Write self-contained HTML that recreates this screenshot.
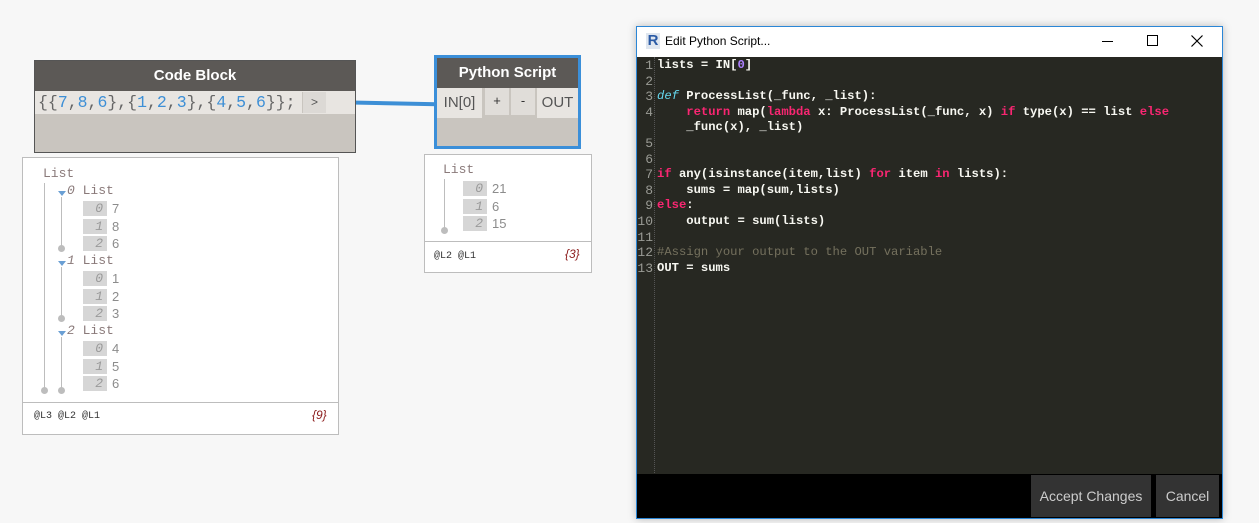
<!DOCTYPE html>
<html><head><meta charset="utf-8"><style>
*{margin:0;padding:0;box-sizing:border-box}
body{width:1259px;height:523px;background:#f7f7f7;position:relative;overflow:hidden;font-family:"Liberation Sans",sans-serif}
.abs{position:absolute}
.mono{font-family:"Liberation Mono",monospace}
.hdr{background:#5c5956;color:#fff;font-weight:bold;font-size:15px;text-align:center}
.watch{background:#fff;border:1px solid #bdbdbd}
.t{position:absolute;font-family:"Liberation Mono",monospace;font-size:13px;color:#8a7a7a;white-space:pre}
.ix{position:absolute;width:24px;height:15px;background:#d6d6d6;color:#999;font-style:italic;font-family:"Liberation Mono",monospace;font-size:13px;text-align:right;padding-right:4px;line-height:15px}
.v{position:absolute;font-family:"Liberation Sans",sans-serif;font-size:13px;color:#8c8c8c;line-height:15px}
.vl{position:absolute;width:1px;background:#bdbdbd}
.dot{position:absolute;width:7px;height:7px;border-radius:50%;background:#bdbdbd}
.tri{position:absolute;width:0;height:0;border-left:4px solid transparent;border-right:4px solid transparent;border-top:5px solid #6a9fd4}
.code{position:absolute;left:657px;font-family:"Liberation Mono",monospace;font-size:12.2px;color:#f8f8f2;font-weight:bold;white-space:pre;line-height:15.6px}
.ln{position:absolute;left:636px;width:17px;text-align:right;font-family:"Liberation Mono",monospace;font-size:13px;color:#9a9b95;line-height:15.6px}
.k{color:#f92672}.d{color:#66d9ef;font-style:italic;font-weight:normal}.n{color:#ae81ff}.c{color:#75715e;font-weight:normal}
</style></head><body>

<!-- wire -->
<div class="abs" style="left:327px;top:100px;width:110px;height:4px;background:#3d8fd6;transform:rotate(1.2deg);transform-origin:left"></div>
<div class="abs" style="left:325px;top:98px;width:8px;height:8px;border-radius:50%;background:#3d8fd6"></div>

<!-- Code Block node -->
<div class="abs" style="left:34px;top:60px;width:322px;height:93px;border:1px solid #555;background:#c9c5bf">
  <div class="hdr" style="height:30px;line-height:30px">Code Block</div>
  <div class="abs mono" style="left:0;top:30px;width:320px;height:23px;background:#e8e5e1;font-size:16.5px;line-height:23px;padding-left:3px;color:#666;white-space:pre">{{<span style="color:#3d8fd6">7</span>,<span style="color:#3d8fd6">8</span>,<span style="color:#3d8fd6">6</span>},{<span style="color:#3d8fd6">1</span>,<span style="color:#3d8fd6">2</span>,<span style="color:#3d8fd6">3</span>},{<span style="color:#3d8fd6">4</span>,<span style="color:#3d8fd6">5</span>,<span style="color:#3d8fd6">6</span>}};</div>
  <div class="abs" style="left:267px;top:31px;width:24px;height:21px;background:#dcd9d5;border-left:1px solid #c9c5bf;color:#555;font-size:12px;text-align:center;line-height:21px">&gt;</div>
</div>

<!-- Watch 1 -->
<div class="abs watch" style="left:22px;top:157px;width:317px;height:246px"></div>
<div class="abs watch" style="left:22px;top:402px;width:317px;height:33px"></div>
<div class="abs mono" style="left:34px;top:411px;font-size:10px;color:#333">@L3 @L2 @L1</div>
<div class="abs" style="left:312px;top:408px;font-size:12px;color:#8b1a1a;font-style:italic">{9}</div>
<div class="t" style="left:43px;top:166px">List</div>
<div class="vl" style="left:44px;top:183px;height:207px"></div><div class="dot" style="left:41px;top:387px"></div>
<div class="tri" style="left:58px;top:191px"></div><div class="t" style="left:67px;top:183px"><i>0</i> List</div>
<div class="vl" style="left:61px;top:197px;height:50px"></div><div class="dot" style="left:58px;top:245px"></div>
<div class="ix" style="left:83px;top:201px">0</div><div class="v" style="left:112px;top:201px">7</div>
<div class="ix" style="left:83px;top:219px">1</div><div class="v" style="left:112px;top:219px">8</div>
<div class="ix" style="left:83px;top:236px">2</div><div class="v" style="left:112px;top:236px">6</div>
<div class="tri" style="left:58px;top:261px"></div><div class="t" style="left:67px;top:253px"><i>1</i> List</div>
<div class="vl" style="left:61px;top:267px;height:50px"></div><div class="dot" style="left:58px;top:315px"></div>
<div class="ix" style="left:83px;top:271px">0</div><div class="v" style="left:112px;top:271px">1</div>
<div class="ix" style="left:83px;top:289px">1</div><div class="v" style="left:112px;top:289px">2</div>
<div class="ix" style="left:83px;top:306px">2</div><div class="v" style="left:112px;top:306px">3</div>
<div class="tri" style="left:58px;top:331px"></div><div class="t" style="left:67px;top:323px"><i>2</i> List</div>
<div class="vl" style="left:61px;top:337px;height:53px"></div><div class="dot" style="left:58px;top:387px"></div>
<div class="ix" style="left:83px;top:341px">0</div><div class="v" style="left:112px;top:341px">4</div>
<div class="ix" style="left:83px;top:359px">1</div><div class="v" style="left:112px;top:359px">5</div>
<div class="ix" style="left:83px;top:376px">2</div><div class="v" style="left:112px;top:376px">6</div>

<!-- Python node -->
<div class="abs" style="left:434px;top:55px;width:147px;height:94px;border:3px solid #3b8fd9;background:#c9c5bf">
  <div class="hdr" style="height:30px;line-height:30px">Python Script</div>
  <div class="abs" style="left:0;top:30px;width:45px;height:30px;background:#e8e5e1;color:#555;font-size:15px;text-align:center;line-height:30px">IN[0]</div>
  <div class="abs" style="left:48px;top:30px;width:24px;height:27px;background:#e0ddd9;color:#333;font-size:13px;text-align:center;line-height:25px">+</div>
  <div class="abs" style="left:74px;top:30px;width:24px;height:27px;background:#e0ddd9;color:#333;font-size:13px;text-align:center;line-height:25px">-</div>
  <div class="abs" style="left:100px;top:30px;width:41px;height:30px;background:#e8e5e1;color:#555;font-size:15px;text-align:center;line-height:30px">OUT</div>
</div>

<!-- Watch 2 -->
<div class="abs watch" style="left:424px;top:154px;width:168px;height:88px"></div>
<div class="abs watch" style="left:424px;top:241px;width:168px;height:32px"></div>
<div class="abs mono" style="left:434px;top:251px;font-size:10px;color:#333">@L2 @L1</div>
<div class="abs" style="left:565px;top:247px;font-size:12px;color:#8b1a1a;font-style:italic">{3}</div>
<div class="t" style="left:443px;top:162px">List</div>
<div class="vl" style="left:444px;top:179px;height:50px"></div><div class="dot" style="left:441px;top:227px"></div>
<div class="ix" style="left:463px;top:181px">0</div><div class="v" style="left:492px;top:181px">21</div>
<div class="ix" style="left:463px;top:199px">1</div><div class="v" style="left:492px;top:199px">6</div>
<div class="ix" style="left:463px;top:216px">2</div><div class="v" style="left:492px;top:216px">15</div>

<!-- Python editor window -->
<div class="abs" style="left:636px;top:26px;width:587px;height:493px;border:1px solid #2b86d6;background:#272822;box-shadow:0 0 8px rgba(0,0,0,.25)"></div>
<div class="abs" style="left:637px;top:27px;width:585px;height:30px;background:#fff"></div>
<div class="abs" style="left:646px;top:33px;width:14px;height:16px;background:#dfe6ef;color:#2a5aa5;font-weight:bold;font-size:15px;line-height:16px;text-align:center">R</div>
<div class="abs" style="left:665px;top:34px;font-size:12px;color:#000">Edit Python Script...</div>
<div class="abs" style="left:1102px;top:41px;width:11px;height:1px;background:#000"></div>
<div class="abs" style="left:1147px;top:35px;width:11px;height:11px;border:1px solid #000"></div>
<svg class="abs" style="left:1191px;top:35px" width="12" height="12"><path d="M0.5 0.5L11.5 11.5M11.5 0.5L0.5 11.5" stroke="#000" stroke-width="1.2"/></svg>
<div class="abs" style="left:654px;top:57px;width:0;height:416px;border-left:1px dotted #555"></div>

<div class="ln" style="top:58px">1<br>2<br>3<br>4<br><br>5<br>6<br>7<br>8<br>9<br>10<br>11<br>12<br>13</div>
<div class="code" style="top:58px">lists = IN[<span class="n">0</span>]

<span class="d">def</span> ProcessList(_func, _list):
    <span class="k">return</span> map(<span class="k">lambda</span> x: ProcessList(_func, x) <span class="k">if</span> type(x) == list <span class="k">else</span>
    _func(x), _list)


<span class="k">if</span> any(isinstance(item,list) <span class="k">for</span> item <span class="k">in</span> lists):
    sums = map(sum,lists)
<span class="k">else</span>:
    output = sum(lists)

<span class="c">#Assign your output to the OUT variable</span>
OUT = sums</div>

<div class="abs" style="left:637px;top:474px;width:585px;height:44px;background:#000"></div>
<div class="abs" style="left:1031px;top:475px;width:120px;height:42px;background:#333;color:#ccc;font-size:14px;text-align:center;line-height:42px">Accept Changes</div>
<div class="abs" style="left:1156px;top:475px;width:63px;height:42px;background:#333;color:#ccc;font-size:14px;text-align:center;line-height:42px">Cancel</div>
</body></html>
